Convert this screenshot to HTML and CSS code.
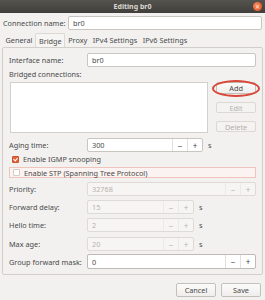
FILE: index.html
```html
<!DOCTYPE html>
<html lang="en">
<head>
    <meta charset="UTF-8">
    <title>Editing br0</title>
    <link rel="stylesheet" href="styles.css">
</head>
<body>
    <div class="window">
        <div class="titlebar">
            <span class="title">Editing br0</span>
            <span class="close">&#215;</span>
        </div>

        <div class="conn-row">
            <span class="label">Connection name:</span>
            <div class="entry conn-entry">br0</div>
        </div>

        <div class="tabs">
            <div class="tab">General</div>
            <div class="tab active">Bridge</div>
            <div class="tab">Proxy</div>
            <div class="tab">IPv4 Settings</div>
            <div class="tab">IPv6 Settings</div>
        </div>

        <div class="page">
            <div class="row r-iface">
                <span class="label">Interface name:</span>
                <div class="entry wide">br0</div>
            </div>
            <div class="section-label">Bridged connections:</div>
            <div class="list-row">
                <div class="list"></div>
                <div class="list-buttons">
                    <div class="btn add">Add<span class="circle"></span></div>
                    <div class="btn disabled">Edit</div>
                    <div class="btn disabled">Delete</div>
                </div>
            </div>
            <div class="row r-aging">
                <span class="label">Aging time:</span>
                <div class="spin aging">
                    <span class="value">300</span>
                    <span class="sb">&#8722;</span><span class="sb">+</span>
                </div>
                <span class="unit">s</span>
            </div>
            <div class="check-row r-igmp">
                <span class="box checked"></span>
                <span>Enable IGMP snooping</span>
            </div>
            <div class="check-row r-stp">
                <span class="box"></span>
                <span>Enable STP (Spanning Tree Protocol)</span>
            </div>
            <div class="row r-prio">
                <span class="label">Priority:</span>
                <div class="spin full off">
                    <span class="value">32768</span>
                    <span class="sb">&#8722;</span><span class="sb">+</span>
                </div>
            </div>
            <div class="row r-fwd">
                <span class="label">Forward delay:</span>
                <div class="spin short off">
                    <span class="value">15</span>
                    <span class="sb">&#8722;</span><span class="sb">+</span>
                </div>
                <span class="unit">s</span>
            </div>
            <div class="row r-hello">
                <span class="label">Hello time:</span>
                <div class="spin short off">
                    <span class="value">2</span>
                    <span class="sb">&#8722;</span><span class="sb">+</span>
                </div>
                <span class="unit">s</span>
            </div>
            <div class="row r-max">
                <span class="label">Max age:</span>
                <div class="spin short off">
                    <span class="value">20</span>
                    <span class="sb">&#8722;</span><span class="sb">+</span>
                </div>
                <span class="unit">s</span>
            </div>
            <div class="row r-group">
                <span class="label">Group forward mask:</span>
                <div class="spin full">
                    <span class="value">0</span>
                    <span class="sb">&#8722;</span><span class="sb">+</span>
                </div>
            </div>
        </div>

        <div class="actions">
            <div class="btn action">Cancel</div>
            <div class="btn action">Save</div>
        </div>
    </div>
</body>
</html>
```

FILE: styles.css
```css
body {
    margin: 0;
    background-color: #f2f1f0;
    font-family: "Noto Sans", "DejaVu Sans", sans-serif;
    font-size: 7.3px;
    color: #4a4a4a;
}
.window {
    width: 265px;
    height: 300px;
    overflow: hidden;
}
.titlebar {
    height: 13px;
    background: linear-gradient(#55534e, #403f3b);
    display: flex;
    align-items: center;
    justify-content: center;
    position: relative;
}
.title {
    color: #dcd8d0;
    font-weight: bold;
    font-size: 7px;
}
.close {
    position: absolute;
    right: 3px;
    top: 2px;
    width: 9px;
    height: 9px;
    border-radius: 50%;
    background: radial-gradient(circle at 40% 35%, #f58a5f, #df4b1c);
    color: #fbe2d6;
    font-size: 8px;
    line-height: 9px;
    text-align: center;
}
.conn-row {
    display: flex;
    align-items: center;
    margin: 3px 3px 0 3px;
    height: 14px;
}
.conn-row .label {
    width: 65px;
}
.entry {
    height: 14px;
    box-sizing: border-box;
    border: 1px solid #c9c5bf;
    border-radius: 2px;
    background: #fff;
    padding-left: 4px;
    display: flex;
    align-items: center;
}
.conn-entry {
    flex: 1;
}
.tabs {
    display: flex;
    margin: 3px 0 0 3px;
    height: 14px;
}
.tab {
    padding: 0 2.5px;
    display: flex;
    align-items: center;
    margin-right: 0.5px;
}
.tab.active {
    background: #f6f5f4;
    border: 1px solid #dcd8d3;
    border-bottom: none;
    border-radius: 2px 2px 0 0;
}
.page {
    margin: 0 2px;
    border: 1px solid #d2cec9;
    border-radius: 2px;
    padding: 5px 6px 5px 6px;
    height: 216px;
}
.row {
    display: flex;
    align-items: center;
    height: 14px;
}
.row .label {
    width: 78px;
    flex-shrink: 0;
}
.wide {
    flex: 1;
}
.section-label {
    margin-top: 2px;
    height: 10px;
    line-height: 10px;
}
.list-row {
    display: flex;
    margin-top: 3px;
    height: 51px;
}
.list {
    width: 199px;
    margin-left: 1px;
    background: #fff;
    border: 1px solid #d3cfca;
    box-sizing: border-box;
}
.list-buttons {
    margin-left: 8px;
    width: 40px;
    display: flex;
    flex-direction: column;
}
.btn {
    height: 12px;
    box-sizing: border-box;
    border: 1px solid #c3bfb9;
    border-radius: 2px;
    background: linear-gradient(#fbfbfa, #efeeec);
    display: flex;
    align-items: center;
    justify-content: center;
    position: relative;
}
.btn.disabled {
    color: #b3b0ab;
    border-color: #dcd9d5;
    background: #f4f3f2;
    height: 11px;
}
.list-buttons .disabled:nth-child(2) { margin-top: 8px; }
.list-buttons .disabled:nth-child(3) { margin-top: 8px; }
.circle {
    position: absolute;
    left: -5px;
    right: -5px;
    top: -3px;
    bottom: -4px;
    border: 2px solid #d9473a;
    border-radius: 50%;
}
.r-aging { margin-top: 5px; }
.spin {
    height: 14px;
    box-sizing: border-box;
    border: 1px solid #c9c5bf;
    border-radius: 2px;
    background: #fff;
    display: flex;
    align-items: center;
}
.spin .value {
    flex: 1;
    padding-left: 4px;
}
.spin .sb {
    width: 14px;
    height: 100%;
    display: flex;
    align-items: center;
    justify-content: center;
    border-left: 1px solid #e3e0dc;
    font-size: 8px;
    color: #3c3c3c;
}
.spin.aging { width: 116px; }
.spin.short { width: 107px; }
.spin.full { flex: 1; }
.spin.off {
    background: #f6f5f4;
    border-color: #dedbd7;
    color: #b5b2ad;
}
.spin.off .sb {
    color: #b5b2ad;
    border-left-color: #eceae7;
}
.unit {
    margin-left: 5px;
}
.check-row {
    display: flex;
    align-items: center;
    height: 12px;
    padding-left: 1px;
}
.check-row .box {
    width: 7px;
    height: 7px;
    box-sizing: border-box;
    border: 1px solid #cfcbc6;
    border-radius: 1px;
    background: #fff;
    margin: 0 4px 0 2px;
    position: relative;
}
.check-row .box.checked {
    background: #e2633a;
    border-color: #cc4f26;
}
.check-row .box.checked::after {
    content: '';
    position: absolute;
    left: 1px;
    top: 0px;
    width: 2px;
    height: 3px;
    border: solid #fff;
    border-width: 0 1px 1px 0;
    transform: rotate(40deg);
}
.r-igmp { margin-top: 1px; }
.r-stp {
    margin-top: 2px;
    height: 11px;
    border: 1px solid #efc4bc;
    background: #fbf3f1;
    box-sizing: border-box;
}
.r-prio { margin-top: 4px; }
.r-fwd { margin-top: 4px; }
.r-hello { margin-top: 4px; }
.r-max { margin-top: 5px; }
.r-group {
    margin-top: 3px;
    height: 15px;
}
.r-group .spin { height: 15px; border-color: #bfbab4; }
.actions {
    display: flex;
    justify-content: flex-end;
    gap: 5px;
    margin: 8px 4px 0 0;
}
.btn.action {
    width: 40px;
    height: 14px;
}
```
